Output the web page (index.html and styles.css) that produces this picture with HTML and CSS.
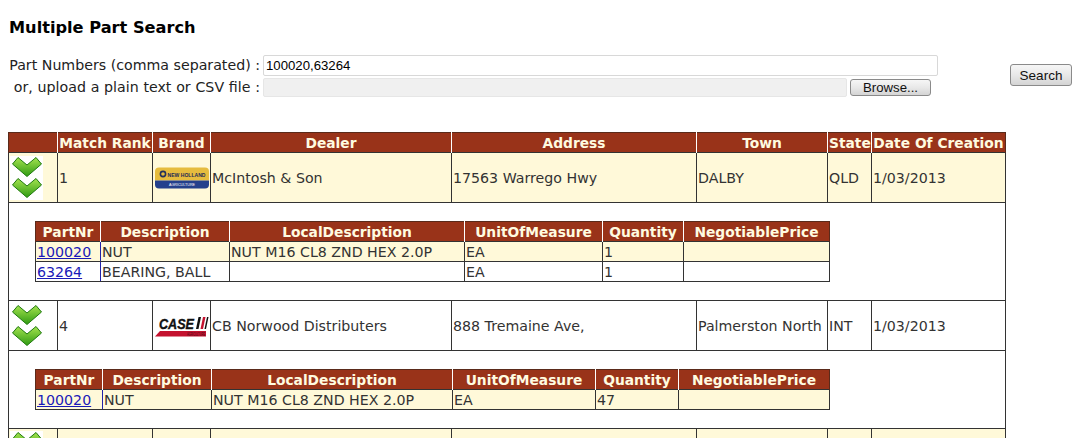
FILE: index.html
```html
<!DOCTYPE html>
<html lang="en">
<head>
    <meta charset="UTF-8">
    <title>Multiple Part Search</title>
    <link rel="stylesheet" href="styles.css">
</head>
<body>

<svg class="defs" width="0" height="0">
    <defs>
        <linearGradient id="green" x1="0" y1="0" x2="0" y2="1">
            <stop offset="0" stop-color="#a4e34f"/>
            <stop offset="1" stop-color="#2f9a12"/>
        </linearGradient>
        <symbol id="ticks" viewBox="0 0 33 44">
            <rect width="33" height="44" fill="#fff"/>
            <path d="M2.5 8 L8 1.5 L17 9 L26 1.5 L31.5 8 L17 20.5 Z" fill="url(#green)" stroke="#1f7a0e"/>
            <path d="M2.5 29 L8 22.5 L17 30 L26 22.5 L31.5 29 L17 41.5 Z" fill="url(#green)" stroke="#1f7a0e"/>
        </symbol>
        <symbol id="new-holland" viewBox="0 0 54 21">
            <path d="M0 13 V4 Q0 0 4 0 H50 Q54 0 54 4 V13 Z" fill="#e6bc3e"/>
            <path d="M0 13 H54 V17 Q54 21 50 21 H4 Q0 21 0 17 Z" fill="#24408c"/>
            <circle cx="8" cy="6.5" r="2.6" fill="none" stroke="#23305c" stroke-width="1.6"/>
            <text x="12.5" y="9.5" textLength="38" lengthAdjust="spacingAndGlyphs" class="nh-text">NEW HOLLAND</text>
            <text x="27" y="18.5" textLength="26" lengthAdjust="spacingAndGlyphs" class="nh-sub">AGRICULTURE</text>
        </symbol>
        <symbol id="case-ih" viewBox="0 0 54 24">
            <text x="4" y="15" textLength="35" lengthAdjust="spacingAndGlyphs" class="case-text">CASE</text>
            <path d="M41 15 L43.5 3 H46 L43.5 15 Z" fill="#111"/>
            <path d="M45.5 15 L48 3 H50.5 L48 15 Z" fill="#c4122f"/>
            <path d="M49.5 15 L52 3 H53.5 L51 15 Z" fill="#111"/>
            <path d="M5 17 H51 V22.5 H0 Z" fill="#c4122f"/>
            <text x="50" y="21.8" textLength="18" lengthAdjust="spacingAndGlyphs" class="case-sub">AGRICULTURE</text>
        </symbol>
    </defs>
</svg>

<h1>Multiple Part Search</h1>

<form class="search-form">
    <div class="fields">
        <div class="field">
            <label class="field-label">Part Numbers (comma separated) :</label>
            <input class="text-input" type="text" value="100020,63264">
        </div>
        <div class="field">
            <label class="field-label field-label-upload">or, upload a plain text or CSV file :</label>
            <div class="file-box"></div>
            <button class="btn btn-browse" type="button">Browse...</button>
        </div>
    </div>
    <button class="btn btn-search" type="button">Search</button>
</form>

<table class="results">
    <colgroup>
        <col class="c-tick"><col class="c-rank"><col class="c-brand"><col class="c-dealer">
        <col class="c-address"><col class="c-town"><col class="c-state"><col class="c-date">
    </colgroup>
    <thead>
        <tr>
            <th></th><th>Match Rank</th><th>Brand</th><th>Dealer</th>
            <th>Address</th><th>Town</th><th>State</th><th>Date Of Creation</th>
        </tr>
    </thead>
    <tbody>
        <tr class="dealer alt">
            <td class="tick"><svg class="tick-icon"><use href="#ticks"/></svg></td>
            <td>1</td>
            <td class="brand"><svg class="logo"><use href="#new-holland"/></svg></td>
            <td>McIntosh &amp; Son</td>
            <td>17563 Warrego Hwy</td>
            <td>DALBY</td>
            <td>QLD</td>
            <td>1/03/2013</td>
        </tr>
        <tr class="detail detail-one">
            <td colspan="8">
                <table class="parts parts-one">
                    <colgroup>
                        <col class="p1"><col class="p2"><col class="p3"><col class="p4"><col class="p5"><col class="p6">
                    </colgroup>
                    <thead>
                        <tr><th>PartNr</th><th>Description</th><th>LocalDescription</th><th>UnitOfMeasure</th><th>Quantity</th><th>NegotiablePrice</th></tr>
                    </thead>
                    <tbody>
                        <tr class="alt"><td class="part-nr"><a href="#">100020</a></td><td>NUT</td><td>NUT M16 CL8 ZND HEX 2.0P</td><td>EA</td><td>1</td><td></td></tr>
                        <tr><td class="part-nr"><a href="#">63264</a></td><td>BEARING, BALL</td><td></td><td>EA</td><td>1</td><td></td></tr>
                    </tbody>
                </table>
            </td>
        </tr>
        <tr class="dealer">
            <td class="tick"><svg class="tick-icon"><use href="#ticks"/></svg></td>
            <td>4</td>
            <td class="brand"><svg class="logo"><use href="#case-ih"/></svg></td>
            <td>CB Norwood Distributers</td>
            <td>888 Tremaine Ave,</td>
            <td>Palmerston North</td>
            <td>INT</td>
            <td>1/03/2013</td>
        </tr>
        <tr class="detail detail-two">
            <td colspan="8">
                <table class="parts parts-two">
                    <colgroup>
                        <col class="q1"><col class="q2"><col class="q3"><col class="q4"><col class="q5"><col class="q6">
                    </colgroup>
                    <thead>
                        <tr><th>PartNr</th><th>Description</th><th>LocalDescription</th><th>UnitOfMeasure</th><th>Quantity</th><th>NegotiablePrice</th></tr>
                    </thead>
                    <tbody>
                        <tr class="alt"><td class="part-nr"><a href="#">100020</a></td><td>NUT</td><td>NUT M16 CL8 ZND HEX 2.0P</td><td>EA</td><td>47</td><td></td></tr>
                    </tbody>
                </table>
            </td>
        </tr>
        <tr class="dealer alt dealer-last">
            <td class="tick"><svg class="tick-icon"><use href="#ticks"/></svg></td>
            <td></td>
            <td class="brand"><svg class="logo"><use href="#new-holland"/></svg></td>
            <td></td><td></td><td></td><td></td><td></td>
        </tr>
    </tbody>
</table>

</body>
</html>
```

FILE: styles.css
```css
html {
    overflow: hidden;
    height: 438px;
}
body {
    font-family: "DejaVu Sans", Verdana, sans-serif;
    font-size: 14.2px;
    color: #333;
    margin: 0;
    padding: 0 8px;
    background-color: #fff;
    height: 438px;
    overflow: hidden;
}
.defs {
    position: absolute;
}
h1 {
    font-size: 16.2px;
    line-height: 20px;
    color: #000;
    margin: 0;
    padding: 18px 0 0 1px;
}

/* search form */
.search-form {
    display: flex;
    justify-content: space-between;
    align-items: center;
    margin-top: 17px;
    height: 42px;
    width: 1064px;
}
.fields {
    display: flex;
    flex-direction: column;
    gap: 1px;
}
.field {
    display: flex;
    align-items: center;
    height: 21px;
}
.field-label {
    width: 252px;
    text-align: right;
    color: #222;
    white-space: nowrap;
    margin-right: 3px;
}
.field-label-upload {
    word-spacing: 0.25px;
}
.text-input {
    width: 675px;
    height: 21px;
    box-sizing: border-box;
    border: 1px solid #d8d8d8;
    border-radius: 2px;
    padding: 0 2px;
    font-family: "Liberation Sans", Arial, sans-serif;
    font-size: 13.2px;
    color: #000;
}
.file-box {
    width: 584px;
    height: 19px;
    box-sizing: border-box;
    background-color: #f0f0f0;
    border: 1px solid #e6e6e6;
    border-radius: 2px;
}
.btn {
    font-family: "Liberation Sans", Arial, sans-serif;
    color: #111;
    border: 1px solid #8a8a8a;
    border-radius: 3px;
    background: linear-gradient(#f6f6f6, #e8e8e8 50%, #d4d4d4);
    padding: 0;
}
.btn-browse {
    width: 81px;
    height: 17px;
    margin-left: 3px;
    font-size: 13.2px;
}
.btn-search {
    width: 62px;
    height: 22px;
    font-size: 13.5px;
    margin-bottom: 2px;
}

/* results */
table {
    border-collapse: collapse;
    table-layout: fixed;
}
.results {
    width: 997px;
    margin-top: 35px;
    border: 1px solid #333;
}
th {
    background-color: #993319;
    color: #fffbe0;
    font-size: 13.8px;
    font-weight: bold;
    height: 19px;
    padding: 0 1px;
    white-space: nowrap;
    border-top: 1px solid #5a2a1a;
    border-bottom: 0;
    border-left: 1px solid #fff;
    border-right: 1px solid #fff;
}
.results > thead th:first-child, .parts th:first-child {
    border-left-color: #5a2a1a;
}
.results > thead th:last-child, .parts th:last-child {
    border-right-color: #5a2a1a;
}
td {
    padding: 0 1px;
    border: 1px solid #333;
    white-space: nowrap;
    overflow: hidden;
}
.dealer td {
    height: 49px;
}
.alt td {
    background-color: #fff9d9;
}
.part-nr {
    border-right-color: #2222aa;
}
.tick {
    padding: 0;
}
.tick-icon {
    display: block;
    width: 33px;
    height: 44px;
    margin-left: 1px;
}
.logo {
    display: block;
    width: 54px;
    height: 24px;
    margin-left: 1px;
}
.dealer-last td {
    vertical-align: top;
}
.dealer-last .tick {
    padding-top: 2px;
}
.dealer-last .brand {
    padding-top: 8px;
}
.nh-text {
    font-family: "Liberation Sans", Arial, sans-serif;
    font-size: 6px;
    font-weight: bold;
    fill: #1d2a55;
}
.nh-sub {
    font-family: "Liberation Sans", Arial, sans-serif;
    font-size: 3.5px;
    fill: #fff;
    text-anchor: middle;
}
.case-text {
    font-family: "Liberation Sans", Arial, sans-serif;
    font-size: 15px;
    font-weight: bold;
    font-style: italic;
    fill: #111;
    stroke: #111;
    stroke-width: 0.4px;
}
.case-sub {
    font-family: "Liberation Sans", Arial, sans-serif;
    font-size: 4.5px;
    fill: #4a0d18;
    text-anchor: end;
}
.detail > td {
    padding: 0 0 0 26px;
    vertical-align: top;
}
.detail-one > td {
    height: 79px;
    padding-top: 18px;
}
.detail-two > td {
    height: 59px;
    padding-top: 18px;
}
.parts {
    width: 794px;
    border: 1px solid #333;
}
.parts td {
    height: 19px;
}
a {
    color: #1a1ab8;
}
.c-tick { width: 49px; }
.c-rank { width: 95px; }
.c-brand { width: 58px; }
.c-dealer { width: 241px; }
.c-address { width: 245px; }
.c-town { width: 131px; }
.c-state { width: 44px; }
.c-date { width: 134px; }
.p1 { width: 65px; }
.p2 { width: 129px; }
.p3 { width: 235px; }
.p4 { width: 138px; }
.p5 { width: 81px; }
.p6 { width: 146px; }
.q1 { width: 67px; }
.q2 { width: 109px; }
.q3 { width: 241px; }
.q4 { width: 143px; }
.q5 { width: 83px; }
.q6 { width: 151px; }
```
